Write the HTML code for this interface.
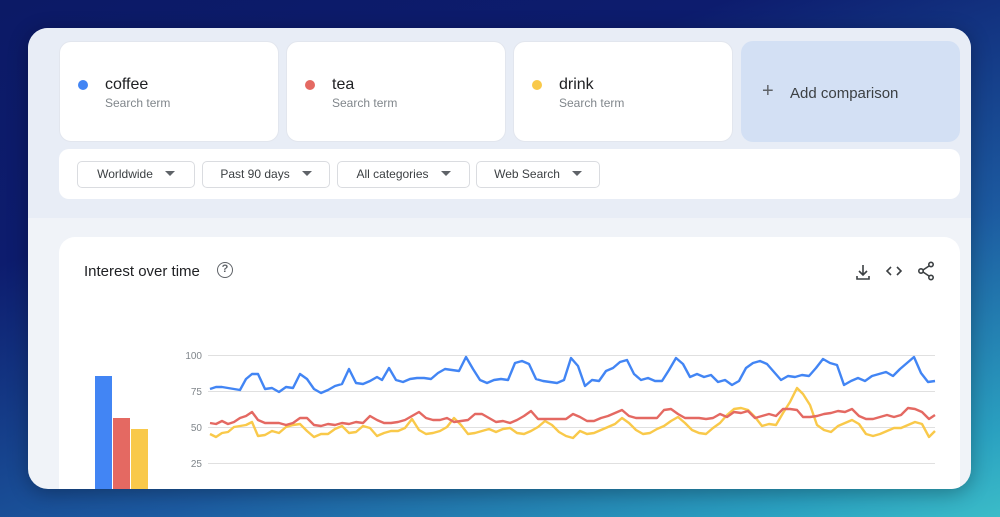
<!DOCTYPE html>
<html><head><meta charset="utf-8"><style>
*{margin:0;padding:0;box-sizing:border-box}
body{width:1000px;height:517px;overflow:hidden;font-family:"Liberation Sans",Arial,sans-serif;
background:linear-gradient(160deg,#0c1a66 0%,#0d1c6e 30%,#1c5aa0 65%,#2aa0c0 90%,#3bbcc8 100%);position:relative}
.win{position:absolute;left:28px;top:28px;width:943px;height:461px;border-radius:20px;background:#f0f3f8;overflow:hidden;box-shadow:0 4px 20px rgba(0,0,0,.3)}
.top{position:absolute;left:0;top:0;width:943px;height:190px;background:#e8edf6}
.term{position:absolute;top:13px;width:220px;height:101px;background:#fff;border-radius:12px;border:1px solid #e2e6ee}
.term .dot{position:absolute;left:18px;top:38px;width:10px;height:10px;border-radius:50%}
.term .n{position:absolute;left:45px;top:34px;font-size:16px;color:#202124}
.term .s{position:absolute;left:45px;top:54px;font-size:12px;color:#80868b}
.add{position:absolute;left:713px;top:13px;width:219px;height:101px;background:#d3e0f4;border-radius:12px;font-size:15px;color:#3c4043}
.filters{position:absolute;left:31px;top:121px;width:901px;height:50px;background:#fff;border-radius:10px}
.f{position:absolute;top:12px;height:27px;border:1px solid #dadce0;border-radius:5px;font-size:12px;color:#3c4043;line-height:25px;text-align:center}
.f:after{content:"";display:inline-block;margin-left:12px;border-left:5px solid transparent;border-right:5px solid transparent;border-top:5px solid #5f6368;vertical-align:2px}
.card{position:absolute;left:31px;top:209px;width:901px;height:280px;background:#fff;border-radius:16px}
</style></head><body>
<div class="win">
<div class="top"></div>
<div class="term" style="left:31px"><div class="dot" style="background:#4285f4"></div><div class="n">coffee</div><div class="s">Search term</div></div>
<div class="term" style="left:258px"><div class="dot" style="background:#e46962"></div><div class="n">tea</div><div class="s">Search term</div></div>
<div class="term" style="left:485px"><div class="dot" style="background:#f9c94a"></div><div class="n">drink</div><div class="s">Search term</div></div>
<div class="add"><span style="position:absolute;left:21px;top:40px;font-size:20px;color:#5f6368;line-height:20px">+</span><span style="position:absolute;left:49px;top:44px">Add comparison</span></div>
<div class="filters">
<div class="f" style="left:18px;width:118px">Worldwide</div>
<div class="f" style="left:143px;width:128px">Past 90 days</div>
<div class="f" style="left:278px;width:133px">All categories</div>
<div class="f" style="left:417px;width:124px">Web Search</div>
</div>
<div class="card">
<div style="position:absolute;left:25px;top:26px;font-size:15px;color:#202124">Interest over time</div>
<div style="position:absolute;left:158px;top:25px;width:16px;height:16px;border:1.5px solid #5f6368;border-radius:50%;font-size:11px;color:#5f6368;text-align:center;line-height:13px;font-weight:bold">?</div>
<svg style="position:absolute;left:0;top:0" width="901" height="280" viewBox="59 237 901 280">
<g fill="none" stroke="#3c4043" stroke-width="1.6">
<path d="M863 265v10M859 271l4 4 4-4M857 276v3h12v-3"/>
<path d="M891 267l-4 4 4 4M897 267l4 4-4 4"/>
<circle cx="931" cy="264.5" r="2.2"/><circle cx="921" cy="271" r="2.2"/><circle cx="931" cy="277.5" r="2.2"/>
<path d="M923 270l6-4M923 272l6 4"/>
</g>
</svg>
</div>
</div>
<svg style="position:absolute;left:0;top:0" width="1000" height="517">
<defs><clipPath id="c"><rect x="28" y="28" width="943" height="461" rx="20"/></clipPath></defs>
<g clip-path="url(#c)">
<g font-size="10" fill="#80868b" text-anchor="end" font-family="Liberation Sans">
<text x="202" y="359">100</text><text x="202" y="395">75</text><text x="202" y="431">50</text><text x="202" y="467">25</text></g>
<g stroke="#e0e0e0" stroke-width="1"><path d="M208 355.5H935M208 391.5H935M208 427.5H935M208 463.5H935"/></g>
<rect x="95" y="376" width="17" height="120" fill="#4285f4"/>
<rect x="113" y="418" width="17" height="80" fill="#e46962"/>
<rect x="131" y="429" width="17" height="70" fill="#f9c94a"/>
<g fill="none" stroke-width="2.4" stroke-linejoin="round">
<polyline stroke="#f9c94a" points="210,434 216,437 222,433 228,432 234,427 240,426 246,425 252,422 258,436 265,435 272,431 279,433 286,427 293,425 300,424 307,431 314,437 321,434 328,434 335,429 342,426 349,433 356,432 363,426 370,428 377,436 384,433 391,431 398,431 405,428 412,419 419,430 426,434 433,433 440,431 447,427 454,418 461,425 468,434 475,433 482,431 489,429 496,432 503,429 510,428 517,433 524,434 531,431 538,427 545,421 552,425 559,432 566,436 573,438 580,431 587,434 594,433 601,430 608,427 615,424 622,418 629,423 636,430 643,434 650,433 657,429 664,426 671,421 678,417 685,423 692,430 699,433 706,434 713,428 720,423 727,415 734,409 741,408 748,410 755,417 762,426 769,424 776,425 783,413 790,402 797,388 803,394 810,405 817,425 824,430 831,432 838,426 845,423 852,420 859,424 866,434 873,436 880,434 887,431 894,428 901,428 908,425 915,422 922,424 929,437 935,431"/>
<polyline stroke="#e46962" points="210,423 216,424 222,421 228,424 234,422 240,418 246,416 252,412 258,420 265,423 272,423 279,423 286,425 293,423 300,418 307,418 314,425 321,426 328,424 335,425 342,423 349,424 356,422 363,423 370,416 377,420 384,423 391,423 398,422 405,420 412,416 419,412 426,418 433,420 440,420 447,418 454,422 461,421 468,420 475,414 482,414 489,418 496,422 503,421 510,423 517,420 524,416 531,411 538,419 545,419 552,419 559,419 566,419 573,414 580,417 587,421 594,421 601,418 608,416 615,413 622,410 629,416 636,418 643,418 650,418 657,418 664,410 671,409 678,414 685,418 692,418 699,418 706,419 713,418 720,414 727,417 734,412 741,413 748,411 755,418 762,416 769,414 776,416 783,409 790,409 797,410 803,417 810,417 817,416 824,414 831,413 838,411 845,412 852,409 859,416 866,419 873,419 880,417 887,415 894,417 901,415 908,408 915,409 922,412 929,419 935,415"/>
<polyline stroke="#4285f4" points="210,389 216,387 222,387 228,388 234,389 240,390 246,379 252,374 258,374 265,389 272,388 279,392 286,387 293,388 300,374 307,379 314,389 321,393 328,390 335,386 342,384 349,369 356,383 363,384 370,381 377,377 382,380 389,368 396,380 403,382 410,379 417,378 424,378 431,379 438,373 445,369 452,370 459,371 466,357 473,369 480,380 487,383 494,380 501,379 508,380 515,363 522,361 529,364 536,379 543,381 550,382 557,383 564,380 571,358 578,366 585,386 592,380 599,381 606,371 613,368 620,362 627,360 634,374 641,380 648,378 655,381 662,381 669,370 676,358 683,364 690,377 697,374 704,377 711,375 718,382 725,380 732,385 739,381 746,368 753,363 760,361 767,364 774,372 781,380 788,376 795,377 802,375 809,376 816,368 823,359 830,363 837,365 844,385 851,381 858,378 865,381 872,376 879,374 886,372 893,376 900,369 907,363 914,357 921,373 928,382 935,381"/>
</g>
</g>
</svg>
</body></html>
